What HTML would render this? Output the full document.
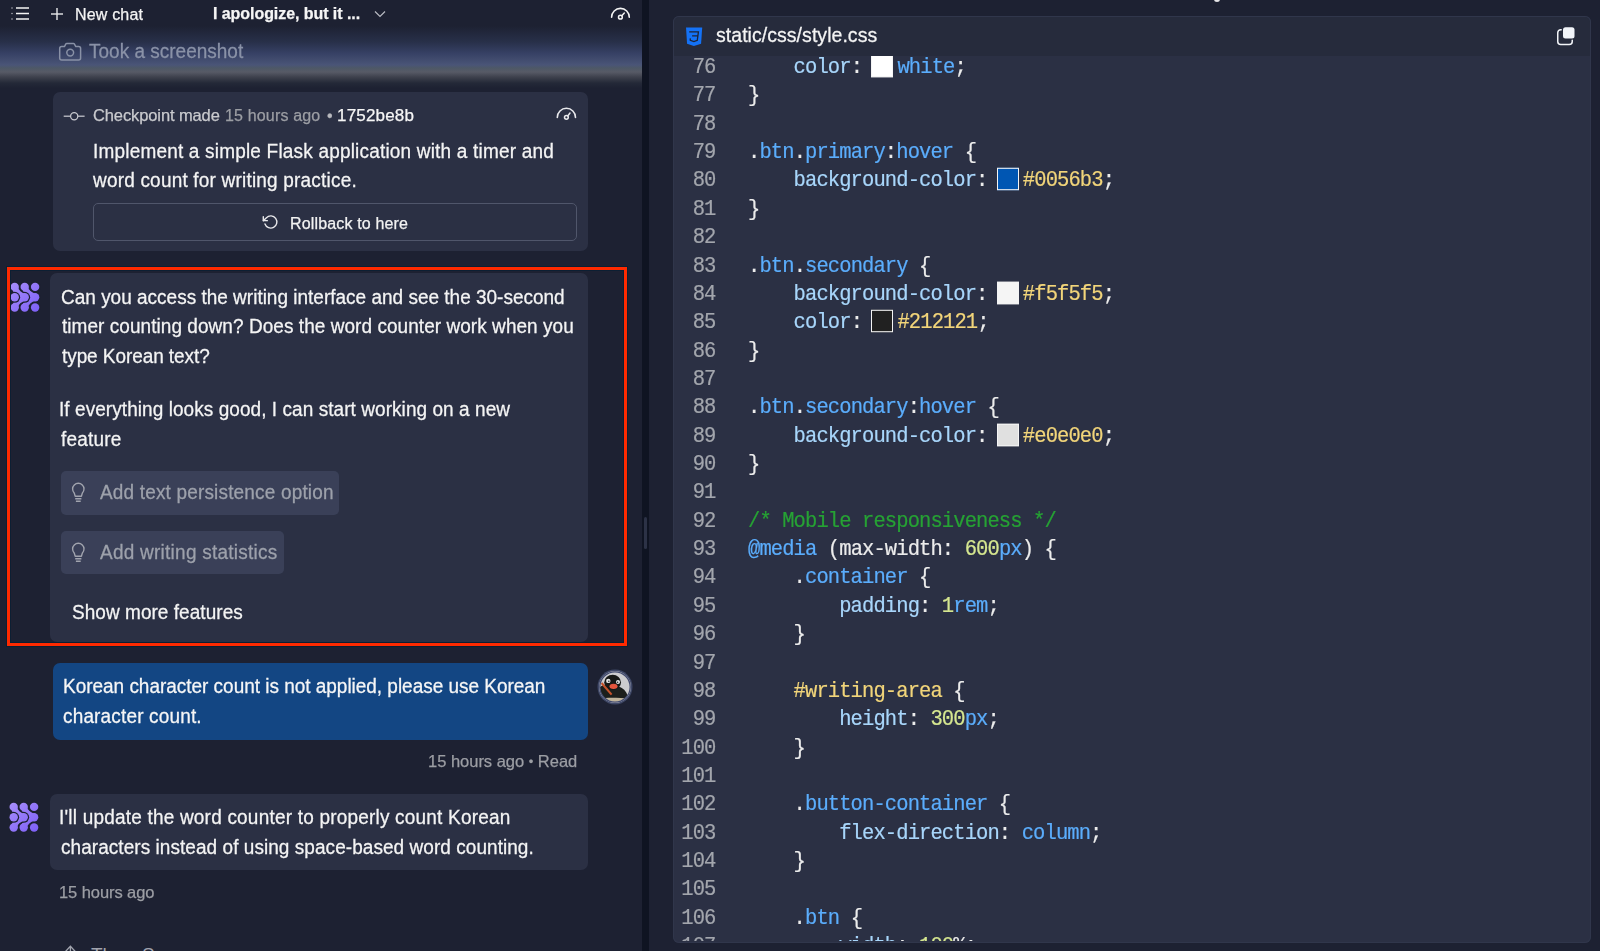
<!DOCTYPE html>
<html><head><meta charset="utf-8">
<style>
*{box-sizing:border-box;margin:0;padding:0}
html,body{width:1600px;height:951px;overflow:hidden;background:#1d2132;font-family:"Liberation Sans",sans-serif;color:#f2f2f2}
.abs{position:absolute}
#left{position:absolute;left:0;top:0;width:642px;height:951px;background:#1d2132;overflow:hidden}
#divider{position:absolute;left:642px;top:0;width:7px;height:951px;background:#0f1422}
#handle{position:absolute;left:644px;top:517px;width:3px;height:32px;border-radius:2px;background:#2c3246}
#right{position:absolute;left:650px;top:0;width:950px;height:951px;background:#1d2132;overflow:hidden}
.t{position:absolute;white-space:pre;z-index:5;will-change:transform;-webkit-text-stroke:0.25px currentColor}
.bubble{position:absolute;background:#2b3044;border-radius:7px}
.chip{position:absolute;background:#3a4058;border-radius:5px}
.gray{color:#9ea1aa}
#card{position:absolute;left:23px;top:16px;width:918px;height:927px;background:#2b3044;border-radius:6px;overflow:hidden;box-shadow:inset 0 0 0 1px #30364b}
#clip{position:absolute;left:1px;top:0;right:1px;bottom:1.8px;overflow:hidden}
#cardhead{position:absolute;left:1px;top:1px;right:1px;height:39px;background:#262b3c;z-index:2;border-radius:5px 5px 0 0}
#code{position:absolute;left:-1px;top:37.6px;width:100%;font-family:"Liberation Mono",monospace;font-size:20.5px;letter-spacing:-0.9px;line-height:28.36px;color:#ececec;will-change:transform;-webkit-text-stroke:0.2px currentColor}
.ln{position:absolute;left:0;width:42.5px;text-align:right;color:#a3a6ad;transform:scaleY(1.07);transform-origin:0 19.64px}
.cl{margin-left:75px;height:28.36px;white-space:pre;transform:scaleY(1.07);transform-origin:0 19.64px}
.cl i{font-style:normal}
.p{color:#a8d6fb}
.s{color:#5badfc}
.h{color:#f2d57a}
.c{color:#26a234}
.n{color:#d6e790}
.sw{display:inline-block;width:22px;height:20.6px;border:1.5px solid #f4f4f4;vertical-align:-3.5px;margin:0 4px 0 -2px}
</style></head><body>
<div id="left">
  <!-- top gradient band -->
  <div class="abs" style="left:0;top:26px;width:642px;height:62px;background:linear-gradient(to bottom,#1d2132 0%,#283049 25.8%,#364064 43.5%,#4a5577 62.9%,#4d5867 67.7%,#575a66 74.2%,#3e414d 82.3%,#242938 91.9%,#1d2132 100%)"></div>
  <!-- top bar -->
  <svg class="abs" style="left:9px;top:5px" width="22" height="18" viewBox="0 0 22 18">
    <g fill="#b8b9c0"><circle cx="3" cy="3" r="0.75"/><circle cx="3" cy="8.5" r="0.75"/><circle cx="3" cy="14" r="0.75"/></g>
    <g stroke="#f4f4f4" stroke-width="1.5"><line x1="7" y1="3" x2="20" y2="3"/><line x1="7" y1="8.5" x2="20" y2="8.5"/><line x1="7" y1="14" x2="20" y2="14"/></g>
  </svg>
  <svg class="abs" style="left:50px;top:7px" width="14" height="14" viewBox="0 0 14 14"><g stroke="#e8e8ea" stroke-width="1.4"><line x1="7" y1="1" x2="7" y2="13"/><line x1="1" y1="7" x2="13" y2="7"/></g></svg>
  <svg class="abs" style="left:373.5px;top:10px" width="12" height="8" viewBox="0 0 12 8"><polyline points="1,1.5 6,6.5 11,1.5" fill="none" stroke="#b8bac2" stroke-width="1.2"/></svg>
  <svg class="abs" style="left:608px;top:5px" width="25" height="17" viewBox="0 0 25 17"><path d="M3.6 12.2 A8.85 8.85 0 0 1 21.3 12.2" fill="none" stroke="#f4f4f4" stroke-width="1.6" stroke-linecap="round"/><circle cx="12.4" cy="12.2" r="1.9" fill="none" stroke="#f4f4f4" stroke-width="1.5"/><line x1="13.8" y1="10.8" x2="16.3" y2="8.1" stroke="#f4f4f4" stroke-width="1.5" stroke-linecap="round"/></svg>
  <!-- took a screenshot -->
  <svg class="abs" style="left:58px;top:42px" width="25" height="20" viewBox="0 0 25 20"><path d="M3.7 4.6 H6.4 L7.9 1.9 Q8.2 1.4 8.8 1.4 H15.4 Q16 1.4 16.3 1.9 L17.8 4.6 H20.6 Q22.6 4.6 22.6 6.6 V15.9 Q22.6 17.9 20.6 17.9 H3.7 Q1.7 17.9 1.7 15.9 V6.6 Q1.7 4.6 3.7 4.6 Z" fill="none" stroke="#8991a6" stroke-width="1.5" stroke-linejoin="round"/><circle cx="12.2" cy="10.6" r="3.4" fill="none" stroke="#8991a6" stroke-width="1.5"/></svg>

  <!-- checkpoint card -->
  <div class="bubble" style="left:53px;top:92px;width:535px;height:159px"></div>
  <svg class="abs" style="left:63px;top:110px" width="22" height="12" viewBox="0 0 22 12"><g fill="none" stroke="#c8c9cf" stroke-width="1.25"><line x1="0.7" y1="6.2" x2="7.4" y2="6.2"/><circle cx="11.2" cy="6.2" r="3.6"/><line x1="14.8" y1="6.2" x2="21.6" y2="6.2"/></g></svg>
  <svg class="abs" style="left:555px;top:104px" width="24" height="17" viewBox="0 0 24 17"><path d="M2.3 13.4 A9.1 9.1 0 0 1 20.5 13.4" fill="none" stroke="#e8e8ec" stroke-width="1.6" stroke-linecap="round"/><circle cx="11.4" cy="13.3" r="1.9" fill="none" stroke="#e8e8ec" stroke-width="1.5"/><line x1="12.7" y1="11.9" x2="15" y2="9.1" stroke="#e8e8ec" stroke-width="1.5" stroke-linecap="round"/></svg>
  <div class="abs" style="left:93px;top:203px;width:484px;height:38px;border:1.5px solid #50566b;border-radius:5px"></div>
  <svg class="abs" style="left:255px;top:208px" width="30" height="28" viewBox="0 0 30 28"><g transform="translate(7.61 5.86) scale(0.678)" fill="none" stroke="#e9e9ec" stroke-width="2.05" stroke-linecap="round" stroke-linejoin="round"><polyline points="1 4 1 10 7 10"/><path d="M3.51 15a9 9 0 1 0 2.13-9.36L1 10"/></g></svg>

  <!-- red highlight box -->
  <div class="abs" style="z-index:4;left:7px;top:267px;width:620px;height:379px;border:3px solid #ff2a00;box-shadow:0 0 0 1px #0c1f33, inset 0 0 0 1px #0c1f33"></div>

  <!-- agent message 1 -->
  <svg id="logo1" class="abs" style="left:9.5px;top:281.5px;z-index:3" width="31" height="31" viewBox="0 0 31 31"><defs><linearGradient id="lga" x1="0" y1="0" x2="31" y2="31" gradientUnits="userSpaceOnUse"><stop offset="0" stop-color="#a88ffb"/><stop offset="1" stop-color="#7a5cf6"/></linearGradient></defs><path d="M14.7 4.9 C16.2 10.9 20.1 12.8 25.1 15.3 C20.1 17.8 16.2 19.5 14.7 25.5" fill="none" stroke="#1d2132" stroke-width="8.5" stroke-linejoin="round"/><circle cx="14.7" cy="4.9" r="5.45" fill="#1d2132"/><circle cx="25.1" cy="15.3" r="5.45" fill="#1d2132"/><circle cx="14.7" cy="25.5" r="5.45" fill="#1d2132"/><path d="M14.7 4.9 C16.2 10.9 20.1 12.8 25.1 15.3 C20.1 17.8 16.2 19.5 14.7 25.5" fill="none" stroke="url(#lga)" stroke-width="6.0" stroke-linejoin="round"/><circle cx="14.7" cy="4.9" r="4.2" fill="url(#lga)"/><circle cx="25.1" cy="15.3" r="4.2" fill="url(#lga)"/><circle cx="14.7" cy="25.5" r="4.2" fill="url(#lga)"/><path d="M4.7 4.9 C6.2 10.9 9.7 12.8 14.7 15.3 C9.7 17.8 6.2 19.5 4.7 25.5" fill="none" stroke="#1d2132" stroke-width="8.5" stroke-linejoin="round"/><circle cx="4.7" cy="4.9" r="5.45" fill="#1d2132"/><circle cx="14.7" cy="15.3" r="5.45" fill="#1d2132"/><circle cx="4.7" cy="25.5" r="5.45" fill="#1d2132"/><path d="M4.7 4.9 C6.2 10.9 9.7 12.8 14.7 15.3 C9.7 17.8 6.2 19.5 4.7 25.5" fill="none" stroke="url(#lga)" stroke-width="6.0" stroke-linejoin="round"/><circle cx="4.7" cy="4.9" r="4.2" fill="url(#lga)"/><circle cx="14.7" cy="15.3" r="4.2" fill="url(#lga)"/><circle cx="4.7" cy="25.5" r="4.2" fill="url(#lga)"/><circle cx="4.7" cy="15.3" r="5.45" fill="#1d2132"/><circle cx="4.7" cy="15.3" r="4.2" fill="url(#lga)"/><circle cx="25.1" cy="4.9" r="5.45" fill="#1d2132"/><circle cx="25.1" cy="4.9" r="4.2" fill="url(#lga)"/><circle cx="25.1" cy="25.5" r="5.45" fill="#1d2132"/><circle cx="25.1" cy="25.5" r="4.2" fill="url(#lga)"/></svg>
  <div class="bubble" style="left:50px;top:273px;width:538px;height:369px"></div>
  <div class="chip" style="left:61px;top:471px;width:278px;height:44px"></div>
  <div class="chip" style="left:61px;top:531px;width:223px;height:43px"></div>

  <!-- user message -->
  <div class="abs" style="left:53px;top:663px;width:535px;height:77px;background:#134683;border-radius:7px"></div>
  <div id="avatar" class="abs" style="left:599px;top:671px;width:32px;height:32px;border-radius:50%;background:#c8c8cc;box-shadow:0 0 0 1.5px #3e4766;overflow:hidden"></div>

  <!-- agent message 2 -->
  <svg id="logo2" class="abs" style="left:9px;top:802px" width="31" height="31" viewBox="0 0 31 31"><defs><linearGradient id="lgb" x1="0" y1="0" x2="31" y2="31" gradientUnits="userSpaceOnUse"><stop offset="0" stop-color="#a88ffb"/><stop offset="1" stop-color="#7a5cf6"/></linearGradient></defs><path d="M14.7 4.9 C16.2 10.9 20.1 12.8 25.1 15.3 C20.1 17.8 16.2 19.5 14.7 25.5" fill="none" stroke="#1d2132" stroke-width="8.5" stroke-linejoin="round"/><circle cx="14.7" cy="4.9" r="5.45" fill="#1d2132"/><circle cx="25.1" cy="15.3" r="5.45" fill="#1d2132"/><circle cx="14.7" cy="25.5" r="5.45" fill="#1d2132"/><path d="M14.7 4.9 C16.2 10.9 20.1 12.8 25.1 15.3 C20.1 17.8 16.2 19.5 14.7 25.5" fill="none" stroke="url(#lgb)" stroke-width="6.0" stroke-linejoin="round"/><circle cx="14.7" cy="4.9" r="4.2" fill="url(#lgb)"/><circle cx="25.1" cy="15.3" r="4.2" fill="url(#lgb)"/><circle cx="14.7" cy="25.5" r="4.2" fill="url(#lgb)"/><path d="M4.7 4.9 C6.2 10.9 9.7 12.8 14.7 15.3 C9.7 17.8 6.2 19.5 4.7 25.5" fill="none" stroke="#1d2132" stroke-width="8.5" stroke-linejoin="round"/><circle cx="4.7" cy="4.9" r="5.45" fill="#1d2132"/><circle cx="14.7" cy="15.3" r="5.45" fill="#1d2132"/><circle cx="4.7" cy="25.5" r="5.45" fill="#1d2132"/><path d="M4.7 4.9 C6.2 10.9 9.7 12.8 14.7 15.3 C9.7 17.8 6.2 19.5 4.7 25.5" fill="none" stroke="url(#lgb)" stroke-width="6.0" stroke-linejoin="round"/><circle cx="4.7" cy="4.9" r="4.2" fill="url(#lgb)"/><circle cx="14.7" cy="15.3" r="4.2" fill="url(#lgb)"/><circle cx="4.7" cy="25.5" r="4.2" fill="url(#lgb)"/><circle cx="4.7" cy="15.3" r="5.45" fill="#1d2132"/><circle cx="4.7" cy="15.3" r="4.2" fill="url(#lgb)"/><circle cx="25.1" cy="4.9" r="5.45" fill="#1d2132"/><circle cx="25.1" cy="4.9" r="4.2" fill="url(#lgb)"/><circle cx="25.1" cy="25.5" r="5.45" fill="#1d2132"/><circle cx="25.1" cy="25.5" r="4.2" fill="url(#lgb)"/></svg>
  <div class="bubble" style="left:50px;top:794px;width:538px;height:76px"></div>
</div>
<div id="divider"></div>
<div id="handle"></div>
<div id="right">
  <div id="card">
    <div id="clip"><div id="code">
<div class="ln">76</div><div class="cl">    <span class="p">color</span>: <i class="sw" style="background:#fff"></i><span class="s">white</span>;</div>
<div class="ln">77</div><div class="cl">}</div>
<div class="ln">78</div><div class="cl"></div>
<div class="ln">79</div><div class="cl">.<span class="s">btn</span>.<span class="s">primary</span>:<span class="s">hover</span> {</div>
<div class="ln">80</div><div class="cl">    <span class="p">background-color</span>: <i class="sw" style="background:#0056b3"></i><span class="h">#0056b3</span>;</div>
<div class="ln">81</div><div class="cl">}</div>
<div class="ln">82</div><div class="cl"></div>
<div class="ln">83</div><div class="cl">.<span class="s">btn</span>.<span class="s">secondary</span> {</div>
<div class="ln">84</div><div class="cl">    <span class="p">background-color</span>: <i class="sw" style="background:#f5f5f5"></i><span class="h">#f5f5f5</span>;</div>
<div class="ln">85</div><div class="cl">    <span class="p">color</span>: <i class="sw" style="background:#212121"></i><span class="h">#212121</span>;</div>
<div class="ln">86</div><div class="cl">}</div>
<div class="ln">87</div><div class="cl"></div>
<div class="ln">88</div><div class="cl">.<span class="s">btn</span>.<span class="s">secondary</span>:<span class="s">hover</span> {</div>
<div class="ln">89</div><div class="cl">    <span class="p">background-color</span>: <i class="sw" style="background:#e0e0e0"></i><span class="h">#e0e0e0</span>;</div>
<div class="ln">90</div><div class="cl">}</div>
<div class="ln">91</div><div class="cl"></div>
<div class="ln">92</div><div class="cl"><span class="c">/* Mobile responsiveness */</span></div>
<div class="ln">93</div><div class="cl"><span class="s">@media</span> (max-width: <span class="n">600</span><span class="s">px</span>) {</div>
<div class="ln">94</div><div class="cl">    .<span class="s">container</span> {</div>
<div class="ln">95</div><div class="cl">        <span class="p">padding</span>: <span class="n">1</span><span class="s">rem</span>;</div>
<div class="ln">96</div><div class="cl">    }</div>
<div class="ln">97</div><div class="cl"></div>
<div class="ln">98</div><div class="cl">    <span class="h">#writing-area</span> {</div>
<div class="ln">99</div><div class="cl">        <span class="p">height</span>: <span class="n">300</span><span class="s">px</span>;</div>
<div class="ln">100</div><div class="cl">    }</div>
<div class="ln">101</div><div class="cl"></div>
<div class="ln">102</div><div class="cl">    .<span class="s">button-container</span> {</div>
<div class="ln">103</div><div class="cl">        <span class="p">flex-direction</span>: <span class="s">column</span>;</div>
<div class="ln">104</div><div class="cl">    }</div>
<div class="ln">105</div><div class="cl"></div>
<div class="ln">106</div><div class="cl">    .<span class="s">btn</span> {</div>
<div class="ln">107</div><div class="cl">        <span class="p">width</span>: <span class="n">100</span>%;</div>
</div>
    </div>
    <div id="cardhead"></div>
  </div>
</div>
<svg class="abs" style="left:70px;top:480px;z-index:3" width="17" height="24" viewBox="0 0 17 24"><path d="M5.2 16.2 L4.2 12.9 A5.7 5.7 0 1 1 12.4 12.9 L11.4 16.2 Z" fill="none" stroke="#a1a4ae" stroke-width="1.4" stroke-linejoin="round"/><path d="M5.2 18.7 H11.4 M5.9 21.3 H10.7" stroke="#a1a4ae" stroke-width="1.4"/></svg><svg class="abs" style="left:70px;top:540.3px;z-index:3" width="17" height="24" viewBox="0 0 17 24"><path d="M5.2 16.2 L4.2 12.9 A5.7 5.7 0 1 1 12.4 12.9 L11.4 16.2 Z" fill="none" stroke="#a1a4ae" stroke-width="1.4" stroke-linejoin="round"/><path d="M5.2 18.7 H11.4 M5.9 21.3 H10.7" stroke="#a1a4ae" stroke-width="1.4"/></svg><svg class="abs" style="left:599px;top:671px;z-index:3" width="32" height="32" viewBox="0 0 32 32"><defs><clipPath id="avc"><circle cx="16" cy="16" r="15"/></clipPath></defs><g clip-path="url(#avc)"><rect width="32" height="32" fill="#cdcdcf"/><path d="M0 17 C3 14 6 13 9 14 L20 15.5 C24 17 27 20 28.5 24 L30 29 L0 29 Z" fill="#1c1f1c"/><ellipse cx="13.6" cy="11.4" rx="8.4" ry="7.6" fill="#161816"/><path d="M0 27.5 C8 26.5 20 26.5 32 28 V32 H0 Z" fill="#bfb39a"/><circle cx="9.3" cy="9.9" r="2.2" fill="#e4e4e4"/><circle cx="19" cy="10.9" r="2" fill="#e2e2e2"/><circle cx="9.8" cy="10.3" r="0.8" fill="#333"/><circle cx="18.6" cy="11.2" r="0.8" fill="#333"/><ellipse cx="14.5" cy="15.3" rx="4" ry="2.6" fill="#e4553c"/><line x1="2.6" y1="12" x2="12.6" y2="23.6" stroke="#c4522b" stroke-width="2.1"/></g><circle cx="16" cy="16" r="15.2" fill="none" stroke="#414a6e" stroke-width="1.3"/></svg><svg class="abs" style="left:685px;top:27px;z-index:6" width="18" height="20" viewBox="0 0 18 20"><path d="M1 0.55 L17.2 0.55 L16.1 16.7 L8.9 18.9 L2.05 16.7 Z" fill="#1472f6"/><path d="M4.2 4.9 H13.4 L12.3 13.3 L8.9 14.6 L5.3 13.3 L5.2 11.4 M7.1 8.9 H12.6" fill="none" stroke="#1e2333" stroke-width="1.3" stroke-linejoin="miter"/></svg><svg class="abs" style="left:1554px;top:25px;z-index:6" width="24" height="24" viewBox="0 0 24 24"><rect x="3.75" y="4.65" width="14.5" height="14.9" rx="3" fill="none" stroke="#f2f4f8" stroke-width="1.5"/><rect x="9" y="2.3" width="11.5" height="11.1" rx="2.5" fill="#f2f5fa" stroke="#262b3c" stroke-width="2.6" paint-order="stroke"/></svg><svg class="abs" style="left:63px;top:944px;z-index:3" width="16" height="7" viewBox="0 0 16 7"><path d="M2.5 7.5 L7.4 2.2 L12.3 7.5 M7.4 2.2 V8" fill="none" stroke="#a1a4ae" stroke-width="1.3"/></svg><div class="abs" style="left:91px;top:940px;font-size:19px;line-height:30px;color:#a1a4ae;white-space:pre;z-index:3">Th<span style="position:absolute;left:51px">S</span></div><div class="abs" style="left:1214px;top:-3px;width:6px;height:5px;border-radius:50%;background:#e6e6e8;z-index:3"></div>
<div id="texts">
<div id="t_newchat" class="t" style="left:75.00px;top:5.00px;font-size:16px;line-height:19.20px;font-weight:400;color:#f4f4f4;letter-spacing:0.171px">New chat</div>
<div id="t_title" class="t" style="left:213.46px;top:4.41px;font-size:16px;line-height:19.20px;font-weight:700;color:#f6f6f6;letter-spacing:-0.060px">I apologize, but it ...</div>
<div id="t_shot" class="t" style="left:88.60px;top:40.56px;font-size:19px;line-height:22.80px;font-weight:400;color:#8a92a7;letter-spacing:0.000px;transform:scaleY(1.05);transform-origin:0 17.98px">Took a screenshot</div>
<div id="t_ckpt" class="t" style="left:93.16px;top:105.90px;font-size:16.5px;line-height:19.80px;font-weight:400;color:#c9cace;letter-spacing:-0.111px">Checkpoint made</div>
<div id="t_ckago" class="t" style="left:225.00px;top:105.91px;font-size:16px;line-height:19.20px;font-weight:400;color:#9c9ea4;letter-spacing:0.164px">15 hours ago</div>
<div id="t_ckdot" class="t" style="left:326.60px;top:105.91px;font-size:16px;line-height:19.20px;font-weight:400;color:#b8b9be;letter-spacing:-4.800px">•</div>
<div id="t_ckhash" class="t" style="left:336.50px;top:105.90px;font-size:17px;line-height:20.40px;font-weight:400;color:#f6f6f6;letter-spacing:0.189px">1752be8b</div>
<div id="t_impl1" class="t" style="left:92.75px;top:140.56px;font-size:19px;line-height:22.80px;font-weight:400;color:#f4f4f4;letter-spacing:0.189px;transform:scaleY(1.05);transform-origin:0 17.98px">Implement a simple Flask application with a timer and</div>
<div id="t_impl2" class="t" style="left:93.35px;top:169.56px;font-size:19px;line-height:22.80px;font-weight:400;color:#f4f4f4;letter-spacing:0.194px;transform:scaleY(1.05);transform-origin:0 17.98px">word count for writing practice.</div>
<div id="t_rollback" class="t" style="left:289.54px;top:213.75px;font-size:16px;line-height:19.20px;font-weight:400;color:#f2f2f2;letter-spacing:0.152px">Rollback to here</div>
<div id="t_m1a" class="t" style="left:60.50px;top:286.56px;font-size:19px;line-height:22.80px;font-weight:400;color:#f4f4f4;letter-spacing:-0.002px;transform:scaleY(1.05);transform-origin:0 17.98px">Can you access the writing interface and see the 30-second</div>
<div id="t_m1b" class="t" style="left:61.70px;top:316.36px;font-size:19px;line-height:22.80px;font-weight:400;color:#f4f4f4;letter-spacing:0.050px;transform:scaleY(1.05);transform-origin:0 17.98px">timer counting down? Does the word counter work when you</div>
<div id="t_m1c" class="t" style="left:61.70px;top:346.36px;font-size:19px;line-height:22.80px;font-weight:400;color:#f4f4f4;letter-spacing:-0.075px;transform:scaleY(1.05);transform-origin:0 17.98px">type Korean text?</div>
<div id="t_m1d" class="t" style="left:59.44px;top:399.31px;font-size:19px;line-height:22.80px;font-weight:400;color:#f4f4f4;letter-spacing:0.061px;transform:scaleY(1.05);transform-origin:0 17.98px">If everything looks good, I can start working on a new</div>
<div id="t_m1e" class="t" style="left:61.45px;top:428.86px;font-size:19px;line-height:22.80px;font-weight:400;color:#f4f4f4;letter-spacing:0.200px;transform:scaleY(1.05);transform-origin:0 17.98px">feature</div>
<div id="t_chip1" class="t" style="left:99.60px;top:482.26px;font-size:19px;line-height:22.80px;font-weight:400;color:#9da1ab;letter-spacing:0.166px;transform:scaleY(1.05);transform-origin:0 17.98px">Add text persistence option</div>
<div id="t_chip2" class="t" style="left:99.60px;top:542.31px;font-size:19px;line-height:22.80px;font-weight:400;color:#9da1ab;letter-spacing:0.246px;transform:scaleY(1.05);transform-origin:0 17.98px">Add writing statistics</div>
<div id="t_more" class="t" style="left:72.00px;top:602.06px;font-size:19px;line-height:22.80px;font-weight:400;color:#f4f4f4;letter-spacing:0.042px;transform:scaleY(1.05);transform-origin:0 17.98px">Show more features</div>
<div id="t_u1" class="t" style="left:63.02px;top:675.86px;font-size:19px;line-height:22.80px;font-weight:400;color:#f6f6f6;letter-spacing:-0.024px;transform:scaleY(1.05);transform-origin:0 17.98px">Korean character count is not applied, please use Korean</div>
<div id="t_u2" class="t" style="left:63.35px;top:706.15px;font-size:19px;line-height:22.80px;font-weight:400;color:#f6f6f6;letter-spacing:0.160px;transform:scaleY(1.05);transform-origin:0 17.98px">character count.</div>
<div id="t_uts" class="t" style="left:427.54px;top:751.70px;font-size:16.5px;line-height:19.80px;font-weight:400;color:#9c9ea4;letter-spacing:-0.013px">15 hours ago <span style="font-size:13px;position:relative;top:-1px">•</span> Read</div>
<div id="t_a1" class="t" style="left:59.46px;top:807.45px;font-size:19px;line-height:22.80px;font-weight:400;color:#f4f4f4;letter-spacing:0.201px;transform:scaleY(1.05);transform-origin:0 17.98px">I'll update the word counter to properly count Korean</div>
<div id="t_a2" class="t" style="left:60.66px;top:837.45px;font-size:19px;line-height:22.80px;font-weight:400;color:#f4f4f4;letter-spacing:0.052px;transform:scaleY(1.05);transform-origin:0 17.98px">characters instead of using space-based word counting.</div>
<div id="t_ats" class="t" style="left:59.46px;top:882.51px;font-size:16.5px;line-height:19.80px;font-weight:400;color:#9c9ea4;letter-spacing:-0.076px">15 hours ago</div>
<div id="t_tab" class="t" style="left:715.66px;top:24.29px;font-size:19.5px;line-height:23.40px;font-weight:400;color:#f4f4f4;letter-spacing:0.044px;transform:scaleY(1.05);transform-origin:0 18.46px">static/css/style.css</div>
</div>
</body></html>
